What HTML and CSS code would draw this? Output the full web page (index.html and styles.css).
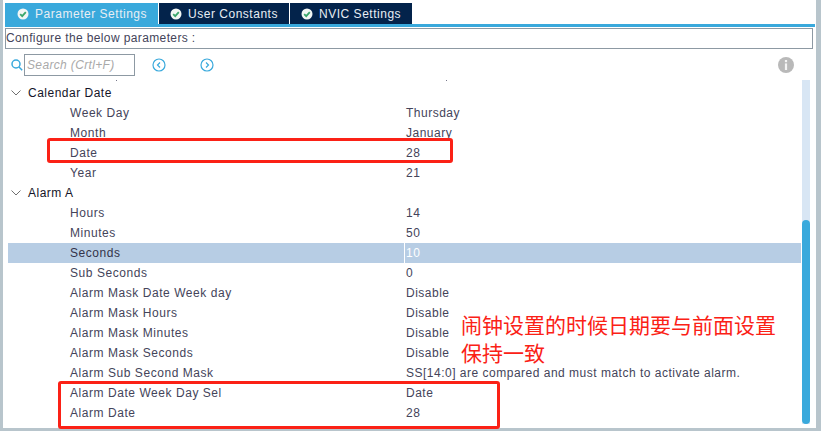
FILE: index.html
```html
<!DOCTYPE html>
<html lang="en">
<head>
  <meta charset="UTF-8" />
  <title>Parameter Settings</title>
  <link rel="stylesheet" href="styles.css">
</head>
<body>
  <div class="panel">
    <div class="tabs">
      <div class="tab active"><svg class="check" viewBox="0 0 12 12"><circle cx="6" cy="6" r="5.5"/><path d="M3.2 6.2l2 2 3.6-4"/></svg>Parameter Settings</div>
      <div class="tab tab-user"><svg class="check" viewBox="0 0 12 12"><circle cx="6" cy="6" r="5.5"/><path d="M3.2 6.2l2 2 3.6-4"/></svg>User Constants</div>
      <div class="tab tab-nvic"><svg class="check" viewBox="0 0 12 12"><circle cx="6" cy="6" r="5.5"/><path d="M3.2 6.2l2 2 3.6-4"/></svg>NVIC Settings</div>
    </div>
    <div class="configure">Configure the below parameters :</div>
    <div class="toolbar">
      <svg class="search-icon" viewBox="0 0 12 12"><circle cx="5" cy="5" r="4"/><path d="M8 8l3.2 3.2"/></svg>
      <div class="search">Search (Crtl+F)</div>
      <svg class="nav nav-prev" viewBox="0 0 14 14"><circle cx="7" cy="7" r="6"/><path d="M8 4.5L5.5 7 8 9.500"/></svg>
      <svg class="nav nav-next" viewBox="0 0 14 14"><circle cx="7" cy="7" r="6"/><path d="M6 4.5L8.5 7 6 9.500"/></svg>
      <svg class="info" viewBox="0 0 16 16"><circle cx="8" cy="8" r="8"/><rect x="6.900" y="3" width="2.200" height="2.200"/><rect x="6.900" y="6.400" width="2.200" height="6.600"/></svg>
    </div>
    <div class="body">
      <div class="tree">
        <!-- descenders of the row scrolled out of view -->
        <div class="scrolled-off"><span class="speck speck-name"></span><span class="speck speck-value"></span></div>
        <div class="row group"><svg class="chevron" viewBox="0 0 10 6"><path d="M.5.5L5 5 9.500.5"/></svg>Calendar Date</div>
        <div class="row"><span class="name">Week Day</span><span class="value">Thursday</span></div>
        <div class="row"><span class="name">Month</span><span class="value">January</span></div>
        <div class="row"><span class="name">Date</span><span class="value">28</span></div>
        <div class="row"><span class="name">Year</span><span class="value">21</span></div>
        <div class="row group"><svg class="chevron" viewBox="0 0 10 6"><path d="M.5.5L5 5 9.500.5"/></svg>Alarm A</div>
        <div class="row"><span class="name">Hours</span><span class="value">14</span></div>
        <div class="row"><span class="name">Minutes</span><span class="value">50</span></div>
        <div class="row selected"><span class="name">Seconds</span><span class="value">10</span></div>
        <div class="row"><span class="name">Sub Seconds</span><span class="value">0</span></div>
        <div class="row"><span class="name">Alarm Mask Date Week day</span><span class="value">Disable</span></div>
        <div class="row"><span class="name">Alarm Mask Hours</span><span class="value">Disable</span></div>
        <div class="row"><span class="name">Alarm Mask Minutes</span><span class="value">Disable</span></div>
        <div class="row"><span class="name">Alarm Mask Seconds</span><span class="value">Disable</span></div>
        <div class="row"><span class="name">Alarm Sub Second Mask</span><span class="value">SS[14:0] are compared and must match to activate alarm.</span></div>
        <div class="row"><span class="name">Alarm Date Week Day Sel</span><span class="value">Date</span></div>
        <div class="row"><span class="name">Alarm Date</span><span class="value">28</span></div>
      </div>
      <div class="scrollbar"><div class="thumb"></div></div>
    </div>
  </div>

  <!-- annotations drawn over the screenshot -->
  <div class="mark mark-date"></div>
  <div class="mark mark-alarm"></div>
  <div class="note">闹钟设置的时候日期要与前面设置<br>保持一致</div>
</body>
</html>
```

FILE: styles.css
```css
* { box-sizing: border-box; }
body {
  margin: 0;
  height: 434px;
  overflow: hidden;
  background: #fff;
  font-family: "Liberation Sans", Arial, sans-serif;
  font-size: 12px;
  color: #44445a;
  position: relative;
}

.panel {
  height: 431px;
  padding: 3px 0 0 2px;
  border-left: 3px solid #b8c5cc;
  border-right: 5px solid #b8c5cc;
  border-bottom: 3px solid #b8c5cc;
  display: flex;
  flex-direction: column;
}

/* Tabs */
.tabs {
  display: flex;
  height: 24px;
  flex: none;
  border-bottom: 3px solid #39a9dc;
  margin-right: 1px;
}
.tab {
  display: flex;
  align-items: center;
  background: #03234b;
  color: #e8eef4;
  letter-spacing: .52px;
  padding-left: 12px;
  margin-right: 1px;
}
.tab.active { background: #39a9dc; width: 153px; }
.tab-user { width: 130px; padding-left: 11px; }
.tab-nvic { width: 122px; padding-left: 11px; }
.check { width: 12px; height: 12px; margin-right: 6px; flex: none; }
.check circle { fill: #f2f6f4; }
.check path { fill: none; stroke: #3aa66b; stroke-width: 1.8; }

.configure {
  height: 21px;
  width: 808px;
  flex: none;
  margin-top: 1px;
  border: 1px solid #8d99a3;
  line-height: 19px;
  letter-spacing: .38px;
}

/* Search row */
.toolbar {
  height: 30px;
  display: flex;
  align-items: center;
  flex: none;
  padding: 1px 0 0 6px;
}
.search-icon { width: 12px; height: 12px; flex: none; }
.search-icon circle, .search-icon path { fill: none; stroke: #39a9dc; stroke-width: 1.5; }
.search {
  width: 111px;
  height: 22px;
  margin-left: 1px;
  border: 1px solid #8d99a3;
  line-height: 20px;
  padding-left: 2px;
  font-style: italic;
  color: #a9a9a9;
  letter-spacing: .35px;
}
.nav { width: 14px; height: 14px; flex: none; }
.nav circle, .nav path { fill: none; stroke: #39a9dc; stroke-width: 1.2; }
.nav-prev { margin-left: 17px; }
.nav-next { margin-left: 34px; }
.info { width: 16px; height: 16px; margin-left: auto; margin-right: 22px; }
.info circle { fill: #b9b9b9; }
.info rect { fill: #f4f4f4; }

/* Tree */
.body {
  flex: 1;
  display: flex;
  min-height: 0;
  padding-top: 1px;
}
.tree { width: 793px; margin-left: 3px; flex: none; }
.scrolled-off { height: 3px; display: flex; }
.speck { width: 1px; height: 1px; background: #77778a; }
.speck-name { margin-left: 108px; }
.speck-value { margin-left: 329px; }
.row {
  height: 20px;
  line-height: 20px;
  display: flex;
  letter-spacing: .55px;
  white-space: nowrap;
}
.row.group { color: #141428; padding-left: 3px; align-items: center; letter-spacing: .5px; }
.chevron { width: 10px; height: 6px; margin-right: 7px; flex: none; }
.chevron path { fill: none; stroke: #707070; stroke-width: 1; }
.name { width: 396px; padding-left: 62px; flex: none; }
.value { padding-left: 2px; letter-spacing: .5px; }
.row.selected { background: #b7cde4; color: #fff; }
.row.selected .name { color: #33334a; }
.row.selected .value { border-left: 1px solid #fff; padding-left: 1px; }

.scrollbar {
  width: 8px;
  margin-left: 1px;
  height: 344px;
  background: #d8e6f4;
  flex: none;
  display: flex;
  flex-direction: column;
  justify-content: flex-end;
}
.thumb { height: 204px; background: #39a9dc; border-radius: 4px; }

/* Red marks over the picture */
.mark {
  position: absolute;
  border: 3px solid #fb2116;
  border-radius: 3px;
}
.mark-date { left: 47px; top: 138px; width: 406px; height: 25px; }
.mark-alarm { left: 58px; top: 381px; width: 442px; height: 48px; }
.note {
  position: absolute;
  left: 461px;
  top: 310px;
  font-family: "Noto Sans CJK SC", sans-serif;
  font-size: 21px;
  line-height: 28px;
  color: #fb2116;
  white-space: nowrap;
}
```
